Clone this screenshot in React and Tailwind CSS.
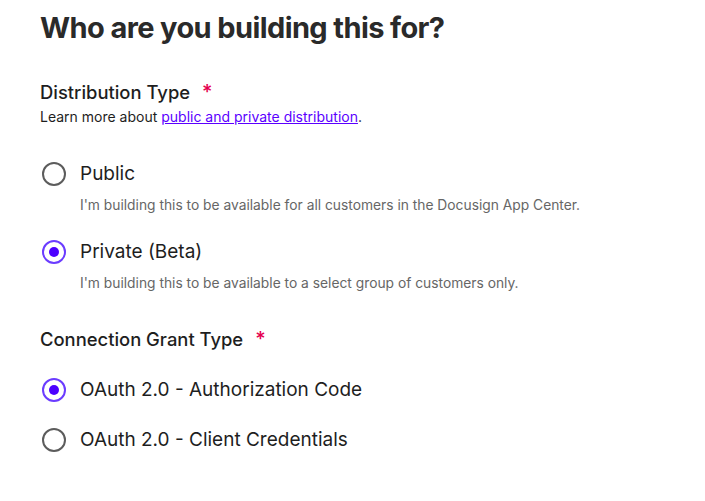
import { useState } from 'react';

function Radio({ checked }) {
  return (
    <span
      className={`ml-[2px] flex h-[24px] w-[24px] shrink-0 items-center justify-center rounded-full border-2 ${
        checked ? 'border-[#6b3cff]' : 'border-[#5c5c5c]'
      }`}
    >
      {checked && <span className="h-[10px] w-[10px] rounded-full bg-[#4c00ff]" />}
    </span>
  );
}

function Option({ label, hint, checked, onSelect }) {
  return (
    <div>
      <button onClick={onSelect} className="flex items-center gap-[14px] text-left">
        <Radio checked={checked} />
        <span className="text-[19px] leading-[24px] text-[#1e1e1e]">{label}</span>
      </button>
      {hint && <p className="mt-[9px] pl-[40px] text-[13.8px] leading-[20px] text-[#666]">{hint}</p>}
    </div>
  );
}

function Label({ children }) {
  return (
    <h2 className="flex items-center text-[18.4px] font-medium leading-[24px] text-[#1e1e1e]">
      {children}
      <span className="ml-[12px] text-[20px] text-[#e5004f]">*</span>
    </h2>
  );
}

export default function App() {
  const [distribution, setDistribution] = useState('private');
  const [grant, setGrant] = useState('code');

  return (
    <div className="min-h-screen bg-white px-[40px] pt-[8px] font-['Inter','Liberation_Sans',sans-serif]">
      <h1 className="text-[29px] font-bold leading-[40px] tracking-[-0.6px] text-[#2a2a2a]">
        Who are you building this for?
      </h1>

      {/* Distribution */}
      <div className="mt-[32px]">
        <Label>Distribution Type</Label>
        <p className="mt-[4px] text-[14px] leading-[18px] text-[#1e1e1e]">
          Learn more about{' '}
          <a href="#" className="text-[#5b00ff] underline">public and private distribution</a>.
        </p>
        <div className="mt-[36px] flex flex-col gap-[25px]">
          <Option
            label="Public"
            hint="I'm building this to be available for all customers in the Docusign App Center."
            checked={distribution === 'public'}
            onSelect={() => setDistribution('public')}
          />
          <Option
            label="Private (Beta)"
            hint="I'm building this to be available to a select group of customers only."
            checked={distribution === 'private'}
            onSelect={() => setDistribution('private')}
          />
        </div>
      </div>

      {/* Grant type */}
      <div className="mt-[34px]">
        <Label>Connection Grant Type</Label>
        <div className="mt-[27px] flex flex-col gap-[26px]">
          <Option label="OAuth 2.0 - Authorization Code" checked={grant === 'code'} onSelect={() => setGrant('code')} />
          <Option label="OAuth 2.0 - Client Credentials" checked={grant === 'client'} onSelect={() => setGrant('client')} />
        </div>
      </div>
    </div>
  );
}
